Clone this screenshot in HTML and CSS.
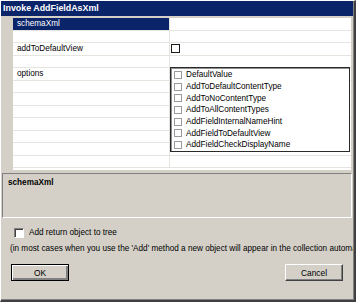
FILE: index.html
```html
<!DOCTYPE html>
<html>
<head>
<meta charset="utf-8">
<link rel="stylesheet" href="styles.css">
</head>
<body>
<div class="window">
  <div class="titlebar">Invoke AddFieldAsXml</div>
  <div class="grid">
    <div class="gutter"></div>
    <div class="rows">
      <div class="row sel"><div class="name">schemaXml</div><div class="val"></div></div>
      <div class="row"><div class="name"></div><div class="val"></div></div>
      <div class="row"><div class="name">addToDefaultView</div><div class="val"><span class="cb dark"></span></div></div>
      <div class="row"><div class="name"></div><div class="val"></div></div>
      <div class="row"><div class="name">options</div><div class="val"></div></div>
      <div class="row"><div class="name"></div><div class="val"></div></div>
      <div class="row"><div class="name"></div><div class="val"></div></div>
      <div class="row"><div class="name"></div><div class="val"></div></div>
      <div class="row"><div class="name"></div><div class="val"></div></div>
      <div class="row"><div class="name"></div><div class="val"></div></div>
      <div class="row"><div class="name"></div><div class="val"></div></div>
      <div class="row"><div class="name"></div><div class="val"></div></div>
    </div>
    <div class="optlist">
      <div class="opt"><span class="cb light"></span>DefaultValue</div>
      <div class="opt"><span class="cb light"></span>AddToDefaultContentType</div>
      <div class="opt"><span class="cb light"></span>AddToNoContentType</div>
      <div class="opt"><span class="cb light"></span>AddToAllContentTypes</div>
      <div class="opt"><span class="cb light"></span>AddFieldInternalNameHint</div>
      <div class="opt"><span class="cb light"></span>AddFieldToDefaultView</div>
      <div class="opt"><span class="cb light"></span>AddFieldCheckDisplayName</div>
    </div>
  </div>
  <div class="desc"><b>schemaXml</b></div>
  <div class="check"><span class="cb sunken"></span>Add return object to tree</div>
  <div class="note">(in most cases when you use the 'Add' method a new object will appear in the collection automatically)</div>
  <div class="buttons">
    <div class="btn default"><span>OK</span></div>
    <div class="btn"><span>Cancel</span></div>
  </div>
</div>
</body>
</html>
```
FILE: styles.css
```css
html, body {
  margin: 0;
  padding: 0;
  background: #ffffff;
}
body {
  font-family: "Liberation Sans", Arial, sans-serif;
  font-size: 8.2px;
  color: #000;
}
.window {
  width: 353px;
  height: 299px;
  background: #d4d0c8;
  border-left: 1px solid #ffffff;
  border-top: 1px solid #ffffff;
  border-right: 2px solid #404040;
  border-bottom: 2px solid #404040;
  box-shadow: inset -1px -1px 0 #808080;
  display: flex;
  flex-direction: column;
  overflow: hidden;
}
.titlebar {
  height: 15px;
  line-height: 15px;
  background: #0a246a;
  color: #fff;
  font-weight: bold;
  font-size: 8.9px;
  padding-left: 2px;
  margin-right: 1px;
}
.grid {
  position: relative;
  display: flex;
  height: 152px;
  padding-top: 2px;
  margin-right: 3px;
}
.gutter {
  width: 12px;
  background: #d4d0c8;
}
.rows {
  flex: 1;
  background: #fff;
}
.row {
  display: flex;
  height: 12.5px;
  box-sizing: border-box;
  border-bottom: 1px solid #e6e4df;
}
.name {
  width: 157px;
  box-sizing: border-box;
  padding-left: 4px;
  line-height: 11.5px;
  border-right: 1px solid #e6e4df;
}
.row.sel .name {
  background: #0a246a;
  color: #fff;
}
.val {
  flex: 1;
  display: flex;
  align-items: center;
}
.cb {
  display: inline-block;
  box-sizing: border-box;
  width: 9px;
  height: 9px;
  background: #fff;
  flex: none;
}
.cb.dark {
  border: 1px solid #1a1a1a;
  margin-left: 1px;
}
.cb.light {
  border: 1px solid #9a9a9a;
  width: 8px;
  height: 8px;
  margin: 0 4px 0 2px;
}
.cb.sunken {
  width: 10px;
  height: 10px;
  border-top: 1px solid #808080;
  border-left: 1px solid #808080;
  border-right: 1px solid #ffffff;
  border-bottom: 1px solid #ffffff;
  box-shadow: inset 1px 1px 0 #404040;
  margin-right: 5px;
}
.optlist {
  position: absolute;
  left: 169px;
  top: 51px;
  width: 180px;
  height: 85px;
  box-sizing: border-box;
  background: #fff;
  border: 1px solid #2a2a2a;
  box-shadow: inset 1px 1px 0 #909090;
  padding-top: 1px;
}
.opt {
  display: flex;
  align-items: center;
  height: 11.7px;
  padding-left: 1px;
}
.desc {
  margin: 3px 2px 0 1px;
  height: 45px;
  box-sizing: border-box;
  border-top: 1px solid #808080;
  border-left: 1px solid #808080;
  border-right: 1px solid #ffffff;
  border-bottom: 1px solid #ffffff;
  padding: 4px 5px;
}
.check {
  display: flex;
  align-items: center;
  margin-top: 9px;
  padding-left: 13px;
  height: 11px;
}
.note {
  margin-top: 5px;
  margin-right: 1px;
  padding-left: 9px;
  white-space: nowrap;
  overflow: hidden;
  height: 11px;
  line-height: 11px;
}
.buttons {
  display: flex;
  justify-content: space-between;
  margin-top: 10px;
  padding: 0 11px 0 10px;
}
.btn {
  width: 58px;
  height: 17px;
  box-sizing: border-box;
  border-top: 1px solid #ffffff;
  border-left: 1px solid #ffffff;
  border-right: 1px solid #404040;
  border-bottom: 1px solid #404040;
  box-shadow: inset -1px -1px 0 #808080;
  display: flex;
  align-items: center;
  justify-content: center;
  font-size: 8.4px;
}
.btn.default {
  border: 1px solid #000;
  box-shadow: inset 1px 1px 0 #ffffff, inset -2px -2px 0 #808080, inset -1px -1px 0 #404040;
}
```
